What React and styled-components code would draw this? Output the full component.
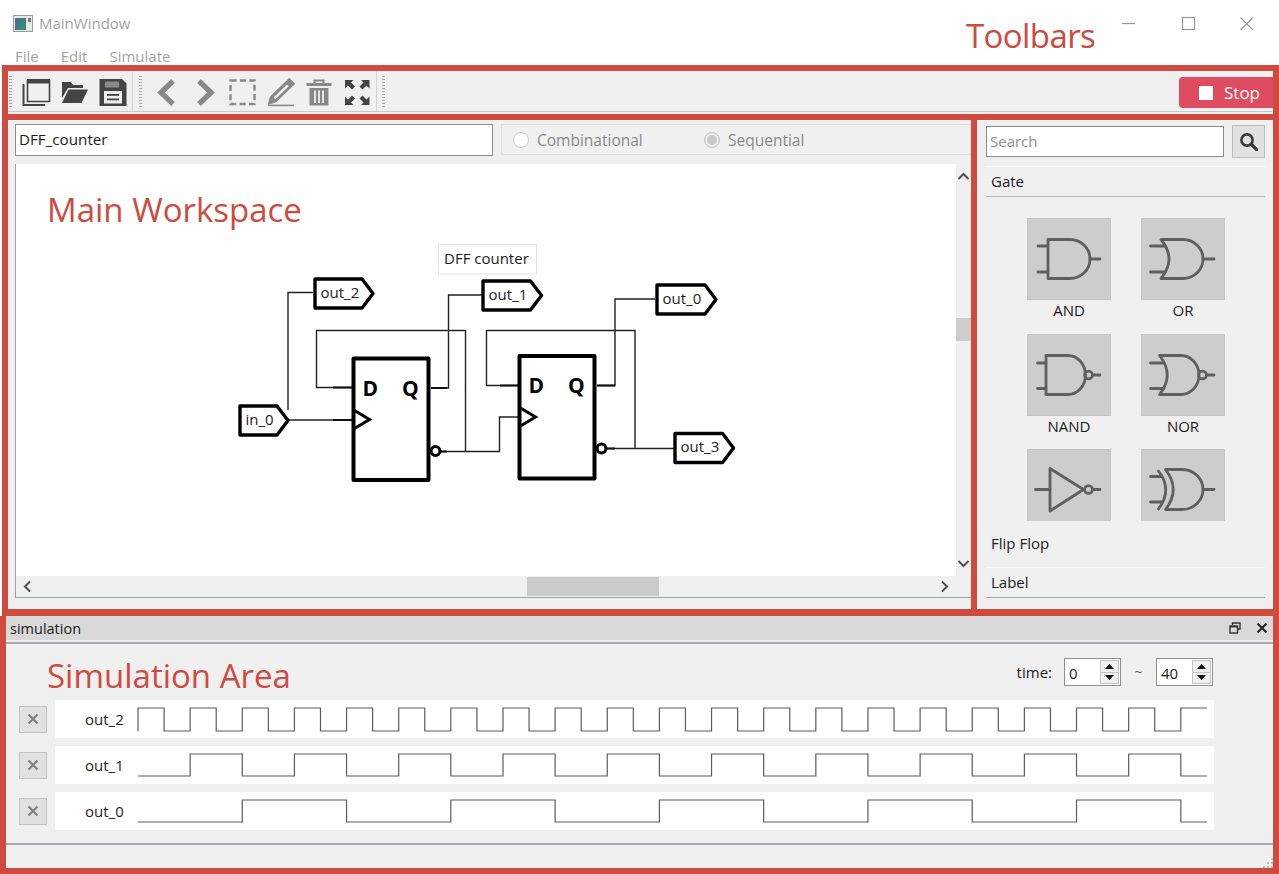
import React from "react";
import styled, { createGlobalStyle } from "styled-components";

const GlobalStyle = createGlobalStyle`
  html, body {
    margin: 0;
    padding: 0;
    background: #fff;
    overflow: hidden;
  }
  * { box-sizing: border-box; }
  body {
    font-family: "Open Sans", "Noto Sans", sans-serif;
    color: #1c1c1c;
  }
`;

const RED = "#cf4a3f";

const Page = styled.div`
  width: 1279px;
  height: 874px;
  display: flex;
  flex-direction: column;
`;

/* ---- window chrome ---- */
const Chrome = styled.header`
  height: 65px;
  padding-left: 13px;
  display: flex;
  flex-direction: column;
  position: relative;
`;

const TitleRow = styled.div`
  height: 33px;
  padding-top: 13px;
  display: flex;
  align-items: center;
  gap: 6px;
  font-size: 15px;
  line-height: 20px;
  color: #a3a3a3;
`;

const MenuRow = styled.nav`
  margin-top: 7px;
  padding: 6px 0 0 2px;
  display: flex;
  gap: 22px;
  font-size: 15px;
  line-height: 20px;
  color: #a3a3a3;
`;

const Toolbars = styled.div`
  position: absolute;
  left: 966px;
  top: 12px;
  font-size: 33px;
  line-height: 48px;
  letter-spacing: -0.6px;
  color: ${RED};
`;

const WindowButtons = styled.div`
  position: absolute;
  right: 22px;
  top: 10px;
  display: flex;
  gap: 39.5px;
`;

/* ---- toolbar ---- */
const ToolbarZone = styled.div`
  margin-left: 2px;
  height: 55px;
  border: 6px solid ${RED};
  background: #f0f0f0;
`;

const ToolbarInner = styled.div`
  height: 41px;
  border-bottom: 1px solid #c8c8c8;
  display: flex;
  align-items: center;
`;

const Grip = styled.span`
  width: 3px;
  height: 33px;
  margin-left: ${(p) => p.$gap}px;
  background-image: radial-gradient(#aaa 0.7px, transparent 0.8px);
  background-size: 2px 3px;
`;

const ToolGroup = styled.div`
  height: 40px;
  padding: 2px ${(p) => p.$right}px 0 ${(p) => p.$left}px;
  display: flex;
  align-items: center;
  gap: 10px;
  border-right: 1px solid #d4d4d4;
`;

const ToolIcon = styled.svg`
  width: 28px;
  height: 28px;
  flex: none;
  overflow: visible;
`;

const StopButton = styled.button`
  margin-left: auto;
  width: 94px;
  height: 31px;
  margin-top: 3px;
  padding: 0 0 0 20px;
  border: none;
  border-radius: 4px 0 0 4px;
  background: #e04c5f;
  color: #fff;
  font-family: inherit;
  font-size: 17px;
  display: flex;
  align-items: center;
  gap: 11px;
`;

const StopSquare = styled.span`
  width: 14px;
  height: 14px;
  background: #fff;
`;

/* ---- main area ---- */
const MainZone = styled.div`
  margin-left: 2px;
  height: 496px;
  display: flex;
  border: 6px solid ${RED};
  border-top: none;
  border-bottom-width: 7px;
  background: #f0f0f0;
`;

const Workspace = styled.section`
  width: 963px;
  flex: none;
  padding: 4px 0 0 7px;
  display: flex;
  flex-direction: column;
`;

const NameRow = styled.div`
  height: 32px;
  display: flex;
  gap: 8px;
`;

const NameInput = styled.div`
  width: 478px;
  height: 32px;
  padding-left: 3px;
  border: 1px solid #8c8c8c;
  background: #fff;
  font-size: 15.2px;
  line-height: 29px;
`;

const ModeGroup = styled.div`
  flex: 1;
  height: 31px;
  padding-left: 11px;
  border: 1px solid #dedede;
  border-right: none;
  display: flex;
  align-items: center;
`;

const RadioLabel = styled.label`
  width: ${(p) => p.$width}px;
  display: flex;
  align-items: center;
  gap: 8px;
  font-size: 15.5px;
  color: #8a8a8a;
`;

const RadioDot = styled.span`
  width: 16px;
  height: 16px;
  border-radius: 50%;
  border: 1px solid #c6c6c6;
  background: ${(p) => (p.$on ? "#c8c8c8" : "#fff")};
  box-shadow: ${(p) => (p.$on ? "inset 0 0 0 2px #f0f0f0" : "none")};
`;

const ScrollFrame = styled.div`
  margin-top: 8px;
  height: 434px;
  display: grid;
  grid-template-columns: 940px 15px;
  grid-template-rows: 412px 21px;
  border-left: 1px solid #a0a0a8;
  border-bottom: 1px solid #a0a0a8;
`;

const Canvas = styled.div`
  position: relative;
  background: #fff;
`;

const WorkspaceTitle = styled.div`
  position: absolute;
  left: 31px;
  top: 22px;
  font-size: 33px;
  line-height: 48px;
  color: ${RED};
`;

const VBar = styled.div`
  display: flex;
  flex-direction: column;
  align-items: center;
`;

const ArrowCell = styled.div`
  flex: none;
  width: ${(p) => p.$w}px;
  height: ${(p) => p.$h}px;
  display: flex;
  align-items: center;
  justify-content: center;
`;

const VThumb = styled.div`
  width: 15px;
  height: 23px;
  margin: 130px 0 auto;
  background: #cdcdcd;
`;

const HBar = styled.div`
  display: flex;
  align-items: stretch;
`;

const HThumb = styled.div`
  width: 132px;
  margin: 1px auto 1px 489px;
  background: #cbcbcb;
`;

/* ---- palette ---- */
const Palette = styled.aside`
  flex: 1;
  border-left: 6px solid ${RED};
  padding: 5px 8px 0 9px;
  display: flex;
  flex-direction: column;
`;

const SearchRow = styled.div`
  height: 33px;
  display: flex;
  align-items: center;
  gap: 8px;
`;

const SearchInput = styled.div`
  width: 238px;
  height: 31px;
  padding-left: 3px;
  border: 1px solid #8c8c8c;
  background: #fff;
  color: #8f8f8f;
  font-size: 15px;
  line-height: 29px;
`;

const SearchButton = styled.button`
  width: 33px;
  height: 33px;
  padding: 0;
  border: 1px solid #bdbdbd;
  background: #e1e1e1;
  display: flex;
  align-items: center;
  justify-content: center;
`;

const SectionHead = styled.div`
  height: ${(p) => p.$h}px;
  margin-top: ${(p) => p.$top || 0}px;
  padding: 0 0 2px 5px;
  display: flex;
  align-items: center;
  font-size: 15px;
  border-top: ${(p) => (p.$noTop ? "none" : "1px solid #fbfbfb")};
  border-bottom: ${(p) => (p.$line ? `1.5px solid ${p.$line}` : "none")};
`;

const GateList = styled.div`
  height: 324px;
  padding: 21px 0 0 41px;
  overflow: hidden;
  display: grid;
  grid-template-columns: 84px 84px;
  grid-auto-rows: 115.5px;
  column-gap: 30px;
`;

const GateItem = styled.div`
  display: flex;
  flex-direction: column;
  align-items: center;
`;

const GateTile = styled.div`
  width: 84px;
  height: 82px;
  flex: none;
  background: #cdcdcd;
  border: 1px solid #c5c5c5;
`;

const GateSvg = styled.svg`
  display: block;
  width: 82px;
  height: 80px;
  fill: none;
  stroke: #5f5f5f;
  stroke-width: 2.8;
  stroke-linecap: round;
  stroke-linejoin: round;
`;

const GateName = styled.div`
  font-size: 15px;
  line-height: 20px;
`;

/* ---- simulation ---- */
const SimZone = styled.section`
  height: 258px;
  border: 6px solid ${RED};
  border-top: none;
  background: #f0f0f0;
  display: flex;
  flex-direction: column;
`;

const DockTitle = styled.div`
  height: 24px;
  flex: none;
  padding: 0 5px 0 4px;
  background: #d9d9d9;
  display: flex;
  align-items: center;
  justify-content: space-between;
  font-size: 14.5px;
`;

const DockButtons = styled.div`
  display: flex;
  align-items: center;
  gap: 15px;
`;

const DockLine = styled.div`
  height: 2px;
  margin-top: 2px;
  flex: none;
  background: #a8acb1;
`;

const SimHead = styled.div`
  height: 56px;
  flex: none;
  padding: 14px 60px 0 41px;
  display: flex;
  align-items: flex-start;
`;

const SimTitle = styled.div`
  margin-top: -6px;
  font-size: 33px;
  line-height: 48px;
  color: ${RED};
`;

const TimeLabel = styled.span`
  margin-left: auto;
  margin-right: 12px;
  font-size: 15px;
  line-height: 28px;
`;

const Tilde = styled.span`
  width: 35px;
  text-align: center;
  font-size: 14px;
  line-height: 28px;
  color: #555;
`;

const SpinBox = styled.div`
  width: 57px;
  height: 28px;
  padding: 1px;
  border: 1px solid #8f8f8f;
  background: #fff;
  display: flex;
  font-size: 15px;
  line-height: 26px;
`;

const SpinValue = styled.span`
  flex: 1;
  padding-left: 3px;
`;

const SpinButtons = styled.div`
  width: 19px;
  display: grid;
  grid-template-rows: 1fr 1fr;
  gap: 1px;
  background: #c4c4c4;
  padding: 1px;
`;

const SpinStep = styled.span`
  display: flex;
  align-items: center;
  justify-content: center;
  background: #f0f0f0;
`;

const SignalList = styled.div`
  padding-left: 13px;
  display: flex;
  flex-direction: column;
  gap: 8px;
`;

const SignalRow = styled.div`
  height: 38px;
  display: flex;
  align-items: center;
  gap: 8px;
`;

const RemoveButton = styled.button`
  width: 28px;
  height: 27px;
  padding: 0;
  border: 1px solid #c2c2c2;
  background: #e1e1e1;
  display: flex;
  align-items: center;
  justify-content: center;
`;

const SignalTrace = styled.div`
  width: 1159px;
  height: 38px;
  padding-left: 30px;
  background: #fff;
  display: flex;
  align-items: center;
`;

const SignalName = styled.span`
  width: 52px;
  flex: none;
  font-size: 15px;
`;

const Wave = styled.svg`
  width: 1077px;
  height: 38px;
  flex: none;
`;

const StatusBar = styled.footer`
  margin-top: auto;
  height: 25px;
  border-top: 2px solid #a8acb1;
  display: flex;
  justify-content: flex-end;
  align-items: flex-end;
`;

const SizeGrip = styled.span`
  width: 11px;
  height: 11px;
  background-image: radial-gradient(#b5b5b5 0.9px, transparent 1px);
  background-size: 4px 4px;
  clip-path: polygon(100% 0, 100% 100%, 0 100%);
`;

/* ---- drawings ---- */
const DARK = "#444";
const GRAY = "#888";

function AppIcon() {
  return (
    <svg width="20" height="17" viewBox="0 0 20 17">
      <defs>
        <linearGradient id="appfill" x1="0" y1="0" x2="1" y2="1">
          <stop offset="0" stopColor="#3c6ea0" />
          <stop offset="1" stopColor="#3d8f6c" />
        </linearGradient>
      </defs>
      <rect x="0.5" y="0.5" width="19" height="16" fill="#e8e8e8" stroke="#999" />
      <rect x="2" y="3" width="11" height="12" fill="url(#appfill)" />
      <rect x="15" y="3" width="3" height="4" fill="#777" />
    </svg>
  );
}

function NewIcon() {
  return (
    <ToolIcon viewBox="0 0 28 28">
      <path d="M5.5 2.5H27.5V23.5H5.5Z" fill="none" stroke={DARK} strokeWidth="1.6" />
      <rect x="5" y="1" width="23" height="4.5" fill={DARK} />
      <path d="M1.5 6V27H23" fill="none" stroke={DARK} strokeWidth="2" />
    </ToolIcon>
  );
}

function OpenIcon() {
  return (
    <ToolIcon viewBox="0 0 28 28">
      <path d="M2 4H10.5L13 7H23V10H8L2 20Z" fill={DARK} />
      <path d="M8.5 11.5H28L21.5 25H2Z" fill={DARK} />
    </ToolIcon>
  );
}

function SaveIcon() {
  return (
    <ToolIcon viewBox="0 0 28 28">
      <path d="M1.5 1H24L28.5 5.5V28H1.5Z" fill={DARK} />
      <rect x="7" y="3.5" width="14" height="6" fill="#8a8a8a" />
      <rect x="6" y="13" width="18" height="12.5" fill="#efefef" />
      <rect x="9" y="16" width="12" height="1.8" fill={DARK} />
      <rect x="9" y="20.5" width="12" height="1.8" fill={DARK} />
    </ToolIcon>
  );
}

function Chevron({ d }) {
  return (
    <ToolIcon viewBox="0 0 28 28">
      <path d={d} fill="none" stroke={GRAY} strokeWidth="5.2" />
    </ToolIcon>
  );
}

function SelectIcon() {
  return (
    <ToolIcon viewBox="0 0 28 28">
      <rect x="1.5" y="2.5" width="24" height="23.5" fill="none" stroke={GRAY} strokeWidth="2.4" strokeDasharray="6 3.4" />
    </ToolIcon>
  );
}

function PencilIcon() {
  return (
    <ToolIcon viewBox="0 0 28 28">
      <path d="M1.5 26L3.5 19L20 3L25 8L8.5 24Z" fill={GRAY} stroke={GRAY} strokeWidth="1.2" strokeLinejoin="round" />
      <path d="M6.5 19.5L20 6.5L21.8 8.3L8.3 21.3Z" fill="#f0f0f0" />
      <path d="M21 1L27 7" stroke={GRAY} strokeWidth="3.4" />
      <path d="M1 27.4H27" stroke={GRAY} strokeWidth="1.6" />
    </ToolIcon>
  );
}

function TrashIcon() {
  return (
    <ToolIcon viewBox="0 0 28 28">
      <path d="M1.5 6.5H26.5" stroke={GRAY} strokeWidth="3" />
      <path d="M9.5 5.5V2.5H18.5V5.5" fill="none" stroke={GRAY} strokeWidth="2.2" />
      <path d="M4.5 10H23.5V27.5H4.5Z" fill={GRAY} />
      <path d="M10 12.5V25M14 12.5V25M18 12.5V25" stroke="#f0f0f0" strokeWidth="1.8" />
    </ToolIcon>
  );
}

function ExpandIcon() {
  return (
    <ToolIcon viewBox="0 0 28 28">
      <path d="M2 2H10.5L8 4.5L12 8.5L9 11.5L5 7.5L2 10.5Z" fill={DARK} />
      <path d="M26.5 2H18L20.5 4.5L16.5 8.5L19.5 11.5L23.5 7.5L26.5 10.5Z" fill={DARK} />
      <path d="M2 27H10.5L8 24.5L12 20.5L9 17.5L5 21.5L2 18.5Z" fill={DARK} />
      <path d="M26.5 27H18L20.5 24.5L16.5 20.5L19.5 17.5L23.5 21.5L26.5 18.5Z" fill={DARK} />
    </ToolIcon>
  );
}

function Tag({ x, y, w, label }) {
  return (
    <g>
      <path
        d={`M${x} ${y}H${x + w - 11}L${x + w} ${y + 14.5}L${x + w - 11} ${y + 29}H${x}Z`}
        fill="#fff"
        stroke="#000"
        strokeWidth="3.4"
        strokeLinejoin="round"
      />
      <text x={x + 5.5} y={y + 18.5} fontSize="15" fill="#1c1c1c">{label}</text>
    </g>
  );
}

function FlipFlop({ x, y, h, w }) {
  return (
    <g>
      <rect x={x} y={y} width={w} height={h} fill="#fff" stroke="#000" strokeWidth="4" strokeLinejoin="round" />
      <path d={`M${x + 1} ${y + 52}L${x + 16} ${y + 61}L${x + 1} ${y + 70}`} fill="none" stroke="#000" strokeWidth="3" />
      <circle cx={x + w + 7} cy={y + 92.5} r="4.4" fill="#fff" stroke="#000" strokeWidth="3" />
      <text x={x + 9} y={y + 37} fontSize="21" fontWeight="700" fill="#000">D</text>
      <text x={x + 48.5} y={y + 37} fontSize="21" fontWeight="700" fill="#000">Q</text>
    </g>
  );
}

function Diagram() {
  const wires = [
    "M288 420H352M288 410V292.5H313",
    "M352 387.5H316.5V330.5H465.5V451",
    "M431 388H448.5V295H482",
    "M440 451.5H499.5V417H520",
    "M518 385.5H486.5V330.5H635V448.5",
    "M597 385.5H615V299H655",
    "M606 448.5H674",
  ];
  // short heavier pieces where the wires leave the blocks
  const stubs = "M333 387.5H352M333 420H352M431 388H447M440 451.5H447M500 385.5H518M597 385.5H615M606 448.5H615";
  return (
    <svg
      width="940"
      height="412"
      viewBox="16 164 940 412"
      style={{ display: "block" }}
      fontFamily="'Open Sans', sans-serif"
    >
      {wires.map((d) => (
        <path key={d} d={d} fill="none" stroke="#222" strokeWidth="1.4" />
      ))}
      <path d={stubs} fill="none" stroke="#111" strokeWidth="2.2" />
      <rect x="438.5" y="244.5" width="98" height="29.5" fill="#fff" stroke="#e2e2e2" />
      <text x="444" y="264" fontSize="15" fill="#1c1c1c">DFF counter</text>
      <FlipFlop x={353.5} y={358.5} w={75} h={121.5} />
      <FlipFlop x={519.5} y={356} w={75} h={122.5} />
      <Tag x={240} y={406} w={48} label="in_0" />
      <Tag x={315} y={279} w={58} label="out_2" />
      <Tag x={483} y={281} w={58.5} label="out_1" />
      <Tag x={657} y={285} w={59} label="out_0" />
      <Tag x={675} y={433.5} w={58.5} label="out_3" />
    </svg>
  );
}

const GATE_PATHS = {
  AND: ["M20 20.5H42A20 19.5 0 0 1 42 59.5H20Z", "M10 27H20M10 53H20M62 40H72"],
  OR: ["M19 20.5H41A20 19.5 0 0 1 41 59.5H19Q35 40 19 20.5Z", "M8.5 27H23M8.5 53H23M61 40H72"],
  NAND: ["M18 20.5H40A17.5 19.5 0 0 1 40 59.5H18Z", "M9.5 28H18M9.5 53.5H18M64.5 40H72"],
  NOR: ["M17.5 20.5H39A18 19.5 0 0 1 39 59.5H17.5Q33 40 17.5 20.5Z", "M8.5 28H22M8.5 53.5H22M64.5 40H72"],
  NOT: ["M22 18.5V61L55.5 39.5Z", "M7.5 39.5H22M64.5 39.5H72"],
  XOR: [
    "M23.5 19.5H40A21 20 0 0 1 40 59.5H23.5Q39 39.5 23.5 19.5Z",
    "M16.5 21Q31 39.5 16.5 59M8.5 26.5H20M8.5 52H20M61 39.5H72",
  ],
};

const BUBBLES = { NAND: [60.5, 40], NOR: [60.5, 40], NOT: [60.5, 39.5] };

function GateCell({ type, name }) {
  const bubble = BUBBLES[type];
  return (
    <GateItem>
      <GateTile>
        <GateSvg viewBox="0 0 82 80">
          {GATE_PATHS[type].map((d) => (
            <path key={d} d={d} />
          ))}
          {bubble && <circle cx={bubble[0]} cy={bubble[1]} r="3.9" />}
        </GateSvg>
      </GateTile>
      {name && <GateName>{name}</GateName>}
    </GateItem>
  );
}

const STEP = 26.07;
const STEPS = 41;

// the counter value decides the level of every bit, out_2 runs inverted
function wavePath(bit, invert, high, low) {
  let d = `M1 ${low}`;
  for (let i = 0; i < STEPS; i++) {
    const on = ((i >> bit) & 1) === 1;
    const level = on !== invert ? high : low;
    const x = 1 + i * STEP;
    d += `L${x} ${level}L${x + STEP} ${level}`;
  }
  return d;
}

function Signal({ name, bit, invert = false, low }) {
  return (
    <SignalRow>
      <RemoveButton>
        <svg width="12" height="12" viewBox="0 0 12 12">
          <path d="M1.5 1.5L10.5 10.5M10.5 1.5L1.5 10.5" stroke="#808080" strokeWidth="2.2" />
        </svg>
      </RemoveButton>
      <SignalTrace>
        <SignalName>{name}</SignalName>
        <Wave viewBox="0 0 1077 38">
          <path d={wavePath(bit, invert, 8, low)} fill="none" stroke="#5c5c5c" strokeWidth="1.2" />
        </Wave>
      </SignalTrace>
    </SignalRow>
  );
}

function Spin({ value }) {
  return (
    <SpinBox>
      <SpinValue>{value}</SpinValue>
      <SpinButtons>
        <SpinStep>
          <svg width="9" height="5" viewBox="0 0 9 5"><path d="M4.5 0L9 5H0Z" fill="#111" /></svg>
        </SpinStep>
        <SpinStep>
          <svg width="9" height="5" viewBox="0 0 9 5"><path d="M0 0H9L4.5 5Z" fill="#111" /></svg>
        </SpinStep>
      </SpinButtons>
    </SpinBox>
  );
}

function ScrollArrow({ d }) {
  return (
    <svg width="13" height="13" viewBox="0 0 13 13">
      <path d={d} fill="none" stroke="#505050" strokeWidth="2" />
    </svg>
  );
}

export default function App() {
  return (
    <Page>
      <GlobalStyle />
      <Chrome>
        <TitleRow>
          <AppIcon />
          MainWindow
        </TitleRow>
        <MenuRow>
          <span>File</span>
          <span>Edit</span>
          <span>Simulate</span>
        </MenuRow>
        <Toolbars>Toolbars</Toolbars>
        <WindowButtons>
          <svg width="20" height="24" viewBox="0 0 20 24">
            <path d="M4 13.5H17" stroke="#999" strokeWidth="1.2" />
          </svg>
          <svg width="20" height="24" viewBox="0 0 20 24">
            <rect x="4.5" y="7.5" width="12" height="12" fill="none" stroke="#999" strokeWidth="1.2" />
          </svg>
          <svg width="20" height="24" viewBox="0 0 20 24">
            <path d="M3.5 7.5L16 20M16 7.5L3.5 20" stroke="#999" strokeWidth="1.2" />
          </svg>
        </WindowButtons>
      </Chrome>

      <ToolbarZone>
        <ToolbarInner>
          <Grip $gap={1} />
          <ToolGroup $left={10} $right={6}>
            <NewIcon />
            <OpenIcon />
            <SaveIcon />
          </ToolGroup>
          <Grip $gap={6} />
          <ToolGroup $left={11} $right={5}>
            <Chevron d="M20 3L8 14.5L20 26" />
            <Chevron d="M8 3L20 14.5L8 26" />
            <SelectIcon />
            <PencilIcon />
            <TrashIcon />
            <ExpandIcon />
          </ToolGroup>
          <Grip $gap={5} />
          <StopButton>
            <StopSquare />
            Stop
          </StopButton>
        </ToolbarInner>
      </ToolbarZone>

      <MainZone>
        <Workspace>
          <NameRow>
            <NameInput>DFF_counter</NameInput>
            <ModeGroup>
              <RadioLabel $width={191}>
                <RadioDot />
                Combinational
              </RadioLabel>
              <RadioLabel $width={120}>
                <RadioDot $on />
                Sequential
              </RadioLabel>
            </ModeGroup>
          </NameRow>
          <ScrollFrame>
            <Canvas>
              <Diagram />
              <WorkspaceTitle>Main Workspace</WorkspaceTitle>
            </Canvas>
            <VBar>
              <ArrowCell $w={15} $h={24}>
                <ScrollArrow d="M1.5 9L6.5 4L11.5 9" />
              </ArrowCell>
              <VThumb />
              <ArrowCell $w={15} $h={26}>
                <ScrollArrow d="M1.5 4L6.5 9L11.5 4" />
              </ArrowCell>
            </VBar>
            <HBar>
              <ArrowCell $w={22} $h={21}>
                <ScrollArrow d="M9 1.5L4 6.5L9 11.5" />
              </ArrowCell>
              <HThumb />
              <ArrowCell $w={24} $h={21}>
                <ScrollArrow d="M4 1.5L9 6.5L4 11.5" />
              </ArrowCell>
            </HBar>
          </ScrollFrame>
        </Workspace>

        <Palette>
          <SearchRow>
            <SearchInput>Search</SearchInput>
            <SearchButton>
              <svg width="19" height="19" viewBox="0 0 19 19">
                <circle cx="8" cy="8" r="5.6" fill="none" stroke="#3a3a3a" strokeWidth="2.6" />
                <path d="M12.5 12.5L17.5 17.5" stroke="#3a3a3a" strokeWidth="3.2" strokeLinecap="round" />
              </svg>
            </SearchButton>
          </SearchRow>
          <SectionHead $h={31} $top={8} $line="#b9b9b9">Gate</SectionHead>
          <GateList>
            <GateCell type="AND" name="AND" />
            <GateCell type="OR" name="OR" />
            <GateCell type="NAND" name="NAND" />
            <GateCell type="NOR" name="NOR" />
            <GateCell type="NOT" />
            <GateCell type="XOR" />
          </GateList>
          <SectionHead $h={46} $noTop>Flip Flop</SectionHead>
          <SectionHead $h={31} $line="#a9a9a9">Label</SectionHead>
        </Palette>
      </MainZone>

      <SimZone>
        <DockTitle>
          simulation
          <DockButtons>
            <svg width="12" height="12" viewBox="0 0 12 12">
              <path d="M3.5 3V1H11V7H8.5" fill="none" stroke="#333" strokeWidth="1.4" />
              <rect x="1" y="4" width="7.5" height="7" fill="none" stroke="#333" strokeWidth="1.4" />
              <path d="M1 4.7H8.5" stroke="#333" strokeWidth="1.6" />
            </svg>
            <svg width="12" height="12" viewBox="0 0 12 12">
              <path d="M1.5 1.5L10.5 10.5M10.5 1.5L1.5 10.5" stroke="#222" strokeWidth="2" />
            </svg>
          </DockButtons>
        </DockTitle>
        <DockLine />
        <SimHead>
          <SimTitle>Simulation Area</SimTitle>
          <TimeLabel>time:</TimeLabel>
          <Spin value="0" />
          <Tilde>~</Tilde>
          <Spin value="40" />
        </SimHead>
        <SignalList>
          <Signal name="out_2" bit={0} invert low={31} />
          <Signal name="out_1" bit={1} low={30} />
          <Signal name="out_0" bit={2} low={30} />
        </SignalList>
        <StatusBar>
          <SizeGrip />
        </StatusBar>
      </SimZone>
    </Page>
  );
}
